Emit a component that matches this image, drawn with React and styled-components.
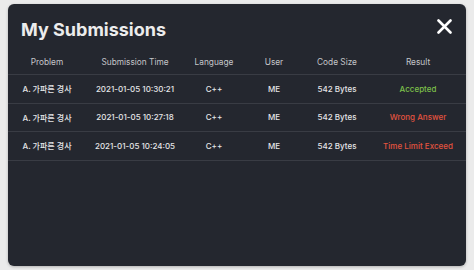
import React from "react"
import styled, { createGlobalStyle } from "styled-components"

const GlobalStyle = createGlobalStyle`
  html, body {
    margin: 0;
    padding: 0;
    background: #ebebeb;
  }
  body {
    font-family: Inter, "Noto Sans CJK KR", sans-serif;
  }
`

const Page = styled.div`
  padding: 4px 8px 4px 8px;
  height: 270px;
  box-sizing: border-box;
`

const Modal = styled.div`
  height: 262px;
  background: #24272f;
  border-radius: 6px;
  box-shadow: 0 1px 3px rgba(0, 0, 0, 0.25);
  overflow: hidden;
`

const TitleBar = styled.div`
  display: flex;
  align-items: center;
  justify-content: space-between;
  padding: 11px 14px 0 13px;
  height: 28px;
`

const Title = styled.h1`
  margin: 0;
  font-size: 18px;
  font-weight: 700;
  color: #ececec;
`

const CloseButton = styled.button`
  border: 0;
  background: none;
  padding: 0;
  width: 16px;
  height: 16px;
  margin-top: -6px;
  display: flex;
  align-items: center;
  justify-content: center;
  cursor: pointer;
`

const Table = styled.div`
  margin-top: 7px;
`

const Row = styled.div`
  display: grid;
  grid-template-columns: 78px 98px 60px 60px 66px 1fr;
  align-items: center;
  height: ${(p) => (p.$head ? "24px" : "27.6px")};
  border-bottom: 1px solid #393c44;
`

const Cell = styled.div`
  text-align: center;
  font-size: ${(p) => (p.$head ? "8.3px" : "8px")};
  font-weight: ${(p) => (p.$head ? 400 : 500)};
  color: ${(p) => p.$color || (p.$head ? "#c4c6ca" : "#e4e5e7")};
  white-space: nowrap;
`

const resultColors = {
  Accepted: "#7cc04a",
  "Wrong Answer": "#e2533f",
  "Time Limit Exceed": "#e2533f",
}

const headers = ["Problem", "Submission Time", "Language", "User", "Code Size", "Result"]

const submissions = [
  { problem: "A. 가파른 경사", time: "2021-01-05 10:30:21", lang: "C++", user: "ME", size: "542 Bytes", result: "Accepted" },
  { problem: "A. 가파른 경사", time: "2021-01-05 10:27:18", lang: "C++", user: "ME", size: "542 Bytes", result: "Wrong Answer" },
  { problem: "A. 가파른 경사", time: "2021-01-05 10:24:05", lang: "C++", user: "ME", size: "542 Bytes", result: "Time Limit Exceed" },
]

const App = () => (
  <Page>
    <GlobalStyle />
    <Modal>
      <TitleBar>
        <Title>My Submissions</Title>
        <CloseButton aria-label="close">
          <svg width="15" height="15" viewBox="0 0 15 15">
            <path d="M1.5 1.5 L13.5 13.5 M13.5 1.5 L1.5 13.5" stroke="#fff" strokeWidth="2.6" strokeLinecap="round" />
          </svg>
        </CloseButton>
      </TitleBar>
      <Table>
        <Row $head>
          {headers.map((h) => (
            <Cell $head key={h}>{h}</Cell>
          ))}
        </Row>
        {submissions.map((s) => (
          <Row key={s.time}>
            <Cell>{s.problem}</Cell>
            <Cell>{s.time}</Cell>
            <Cell>{s.lang}</Cell>
            <Cell>{s.user}</Cell>
            <Cell>{s.size}</Cell>
            <Cell $color={resultColors[s.result]}>{s.result}</Cell>
          </Row>
        ))}
      </Table>
    </Modal>
  </Page>
)

export default App
